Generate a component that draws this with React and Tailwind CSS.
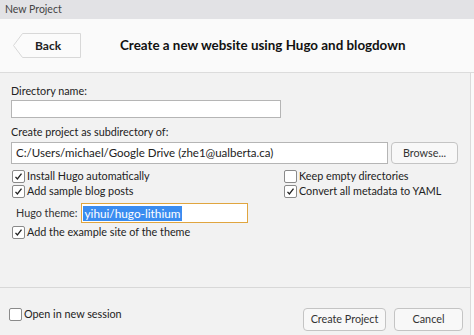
import React from "react";

function Box({ checked }) {
  return (
    <span className="inline-flex h-[13px] w-[13px] shrink-0 items-center justify-center rounded-[2px] border border-[#8a8a8a] bg-white">
      {checked && (
        <svg width="9" height="9" viewBox="0 0 9 9">
          <path d="M1.5 4.8 L3.4 7 L7.5 1.6" fill="none" stroke="#222" strokeWidth="1.3" />
        </svg>
      )}
    </span>
  );
}

function Check({ checked, label, className = "" }) {
  return (
    <div className={"flex items-center gap-[2px] whitespace-nowrap " + className}>
      <Box checked={checked} />
      <span>{label}</span>
    </div>
  );
}

export default function App() {
  return (
    <div
      className="h-[335px] w-[474px] overflow-hidden bg-[#f7f7f7] text-[10.8px] text-[#222]"
      style={{ fontFamily: 'Lato, "Open Sans", sans-serif' }}
    >
      <div className="flex h-[19px] items-center bg-[#e2e2e5] pl-[5px] text-[10.5px] text-[#444]">
        New Project
      </div>
      <div className="flex h-[54px] items-center border-b border-[#dcdcdc] bg-[#fafafa]">
        <div className="relative ml-[13px] flex h-[25px] w-[68px] items-center">
          <svg width="68" height="25" viewBox="0 0 68 25" className="absolute left-0 top-0">
            <path d="M9.5 0.5 H67.5 V24.5 H9.5 L0.5 12.5 Z" fill="#fbfbfb" stroke="#d8d8d8" />
          </svg>
          <span className="relative ml-[22px] text-[12px] font-bold text-[#222]">Back</span>
        </div>
        <div className="ml-[39px] text-[13.4px] font-bold text-[#111]">
          Create a new website using Hugo and blogdown
        </div>
      </div>
      <div className="flex h-[262px]">
        <div className="flex w-[471px] flex-col border-r border-[#dadada] bg-[#f2f2f2]">
          <div className="flex-1 px-[11px] pt-[10px]">
            <div className="leading-[16px]">Directory name:</div>
            <div className="mt-[1px] h-[18px] w-[270px] border border-[#b5b5b5] bg-white" />
            <div className="mt-[6px] leading-[16px]">Create project as subdirectory of:</div>
            <div className="mt-[2px] flex items-center gap-[3px]">
              <div className="flex h-[22px] w-[377px] items-center border border-[#b5b5b5] bg-white pl-[4px] text-[11.5px]">
                C:/Users/michael/Google Drive (zhe1@ualberta.ca)
              </div>
              <div className="flex h-[22px] w-[67px] items-center justify-center rounded-[4px] border border-[#c4c4c4] bg-[#f8f8f8] text-[#333]">
                Browse...
              </div>
            </div>
            <div className="mt-[5px] flex">
              <div className="w-[273px] pl-[1px]">
                <Check checked label="Install Hugo automatically" className="h-[15px]" />
                <Check checked label="Add sample blog posts" className="h-[15px]" />
                <div className="mt-[4px] flex items-center">
                  <span className="ml-[4px] text-[#333]">Hugo theme:</span>
                  <div className="ml-[4px] flex h-[20px] w-[167px] items-center border border-[#e0a53f] bg-white pl-[1px] text-[11.8px]">
                    <span className="bg-[#3a8cf0] px-[1px] leading-[15px] text-white">yihui/hugo-lithium</span>
                  </div>
                </div>
                <Check checked label="Add the example site of the theme" className="mt-[2px] h-[15px]" />
              </div>
              <div>
                <Check label="Keep empty directories" className="h-[15px]" />
                <Check checked label="Convert all metadata to YAML" className="h-[15px]" />
              </div>
            </div>
          </div>
          <div className="flex h-[48px] items-center border-t border-[#d8d8d8] pl-[9px] pr-[7px] pt-[5px]">
            <Check label="Open in new session" />
            <div className="ml-auto flex gap-[8px] pt-[10px]">
              <div className="flex h-[23px] w-[83px] items-center justify-center rounded-[4px] border border-[#c4c4c4] bg-[#f8f8f8] text-[#333]">
                Create Project
              </div>
              <div className="flex h-[23px] w-[69px] items-center justify-center rounded-[4px] border border-[#c4c4c4] bg-[#f8f8f8] text-[#333]">
                Cancel
              </div>
            </div>
          </div>
        </div>
        <div className="flex-1 bg-[#fafafa]" />
      </div>
    </div>
  );
}
